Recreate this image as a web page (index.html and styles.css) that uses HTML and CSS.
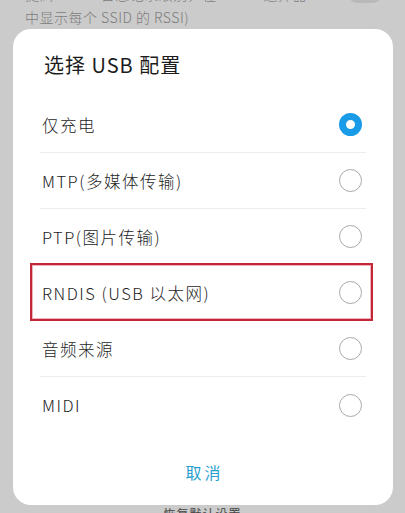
FILE: index.html
```html
<!DOCTYPE html>
<html lang="zh-CN">
<head>
<meta charset="utf-8">
<link rel="stylesheet" href="styles.css">
</head>
<body>
<div class="page">
  <div class="bg-top">
    <div class="bg-row">
      <div class="bg-text">
        <div class="bg-line">提高 WLAN 日志记录级别，在 WLAN 选择器</div>
        <div class="bg-line">中显示每个 SSID 的 RSSI)</div>
      </div>
      <div class="bg-toggle"></div>
    </div>
  </div>
  <div class="bg-bottom">恢复默认设置</div>

  <div class="dialog">
    <div class="title">选择 USB 配置</div>
    <div class="list">
      <div class="item"><span class="label">仅充电</span><span class="radio checked"></span></div>
      <div class="item"><span class="label">MTP(多媒体传输)</span><span class="radio"></span></div>
      <div class="item"><span class="label">PTP(图片传输)</span><span class="radio"></span></div>
      <div class="item highlighted"><span class="label">RNDIS (USB 以太网)</span><span class="radio"></span><span class="mark"></span></div>
      <div class="item"><span class="label">音频来源</span><span class="radio"></span></div>
      <div class="item last"><span class="label">MIDI</span><span class="radio"></span></div>
    </div>
    <div class="actions"><span class="cancel">取消</span></div>
  </div>
</div>
</body>
</html>
```
FILE: styles.css
```css
* { box-sizing: border-box; }
html, body {
  margin: 0;
  padding: 0;
  width: 405px;
  height: 513px;
  overflow: hidden;
  background: #cbcbcb;
  font-family: "Noto Sans CJK SC", "Noto Sans", sans-serif;
}
.page {
  position: relative;
  width: 405px;
  height: 513px;
  overflow: hidden;
  display: flex;
  flex-direction: column;
}
.bg-top {
  margin-top: -17px;
  padding: 0 25px;
}
.bg-row {
  display: flex;
  justify-content: space-between;
  align-items: flex-start;
}
.bg-line {
  font-size: 14px;
  line-height: 23px;
  color: #7d7d7d;
  font-weight: 300;
  letter-spacing: 0.5px;
}
.bg-toggle {
  width: 34px;
  height: 18px;
  margin-top: 2px;
  margin-right: -2px;
  border-radius: 9px;
  background: #b9b9b9;
}
.bg-bottom {
  margin-top: auto;
  margin-bottom: -9px;
  text-align: center;
  font-size: 12px;
  line-height: 16px;
  color: #444;
  letter-spacing: 1px;
}
.dialog {
  position: absolute;
  left: 13px;
  top: 29px;
  width: 380px;
  height: 476px;
  background: #fff;
  border-radius: 18px;
  display: flex;
  flex-direction: column;
}
.title {
  padding: 22px 0 0 31px;
  height: 68px;
  font-size: 20px;
  line-height: 28px;
  color: #1c1c1c;
  font-weight: 400;
  letter-spacing: 1px;
}
.list {
  display: flex;
  flex-direction: column;
  padding: 0 27px 0 27px;
}
.item {
  position: relative;
  height: 56px;
  display: flex;
  align-items: center;
  justify-content: space-between;
  border-bottom: 1px solid #ececec;
}
.item.last { border-bottom: none; }
.label {
  padding-left: 2px;
  font-size: 16.5px;
  color: #1e1e1e;
  font-weight: 300;
  letter-spacing: 1.5px;
}
.radio {
  width: 23px;
  height: 23px;
  margin-right: 4px;
  border-radius: 50%;
  border: 1px solid #a9a9a9;
}
.radio.checked {
  border: 7px solid #1a9be7;
  background: #fff;
}
.mark {
  position: absolute;
  left: -10px;
  right: -7px;
  top: -2px;
  bottom: -1px;
  border: 2px solid #c3283a;
  box-shadow: inset 0 0 0 1px #eeb3ba;
  pointer-events: none;
}
.actions {
  margin-top: 25px;
  display: flex;
  justify-content: center;
}
.cancel {
  font-size: 16px;
  line-height: 28px;
  color: #2a9fcf;
  letter-spacing: 3px;
  padding-left: 3px;
}
```
